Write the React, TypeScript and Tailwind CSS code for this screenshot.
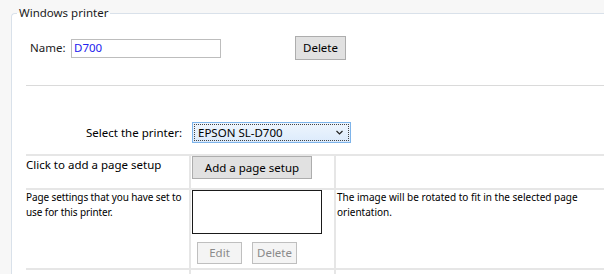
export default function App() {
  return (
    <div className="w-[604px] h-[274px] overflow-hidden bg-[#f7f7f7] pl-[11px] pt-[5px] font-['Noto_Sans',sans-serif] text-[11.5px] text-black">
      <fieldset className="h-[320px] min-w-0 rounded-tl-[4px] border-l border-t border-[#d9e1ea] bg-white">
        <legend className="ml-[5px] px-[2px] text-[11.5px] leading-[16px] text-[#1b1b1b]">
          Windows printer
        </legend>

        <div className="pl-[14px]">
          {/* name row */}
          <div className="mt-[15px] flex h-[24px] items-center">
            <span className="ml-[4px] w-[41px] text-[#222]">Name:</span>
            <div className="flex h-[19px] w-[150px] items-center border border-[#bdbdbd] bg-white pl-[2px] text-[#2222ee]">
              D700
            </div>
            <button className="ml-[74px] h-[24px] w-[51px] border border-[#adadad] bg-[#e1e1e1] leading-none">
              Delete
            </button>
          </div>

          <div className="mt-[25px] border-t border-[#dadada]" />

          {/* printer select */}
          <div className="mt-[36px] flex h-[21px] items-center">
            <span className="w-[156px] text-right">Select the printer:</span>
            <div className="ml-[10px] h-[21px] w-[159px] border border-[#7eb4ea] bg-gradient-to-b from-[#eef5fd] to-[#dcebfc] p-[1px]">
              <div className="flex h-full items-center justify-between border border-dotted border-[#444] pl-[3px] pr-[5px]">
                <span>EPSON SL-D700</span>
                <svg width="7" height="5" viewBox="0 0 7 5">
                  <path d="M0.5 1 L3.5 4 L6.5 1" fill="none" stroke="#222" strokeWidth="1.2" />
                </svg>
              </div>
            </div>
          </div>

          {/* settings table */}
          <div className="mt-[11px] whitespace-nowrap">
            <div className="grid h-[34px] grid-cols-[163px_145px_1fr] border-t-2 border-[#e6e6e6]">
              <div className="pt-[1px] leading-[16px]">Click to add a page setup</div>
              <div className="border-l-2 border-[#e6e6e6] pl-[1px]">
                <button className="h-[23px] w-[120px] border border-[#adadad] bg-[#e1e1e1] text-[11.5px] leading-none">
                  Add a page setup
                </button>
              </div>
              <div className="border-l-2 border-[#e6e6e6]" />
            </div>

            <div className="grid h-[80px] grid-cols-[163px_145px_1fr] border-t-2 border-[#e6e6e6] text-[10px] leading-[15px]">
              <div className="tracking-[-0.1px]">
                Page settings that you have set to
                <br />
                use for this printer.
              </div>
              <div className="border-l-2 border-[#e6e6e6] pl-[1px] text-[11.5px]">
                <div className="h-[44px] w-[130px] border border-[#1a1a1a] bg-white" />
                <div className="mt-[8px] ml-[5px] flex gap-[10px]">
                  <button className="h-[22px] w-[45px] border border-[#bfbfbf] bg-[#f4f4f4] leading-none text-[#8a8a8a]">
                    Edit
                  </button>
                  <button className="h-[22px] w-[45px] border border-[#bfbfbf] bg-[#f4f4f4] leading-none text-[#8a8a8a]">
                    Delete
                  </button>
                </div>
              </div>
              <div className="border-l-2 border-[#e6e6e6] pl-[1px]">
                The image will be rotated to fit in the selected page
                <br />
                orientation.
              </div>
            </div>

            <div className="grid h-[40px] grid-cols-[163px_145px_1fr] border-t-2 border-[#e6e6e6] text-[10px] leading-[15px]">
              <div className="overflow-hidden pt-[1px]">Controls how the image is fit into</div>
              <div className="border-l-2 border-[#e6e6e6]" />
              <div className="overflow-hidden border-l-2 border-[#e6e6e6] pl-[1px] pt-[1px]">
                Determines if the image should be cropped or shrunk to fit.
              </div>
            </div>
          </div>
        </div>
      </fieldset>
    </div>
  );
}
